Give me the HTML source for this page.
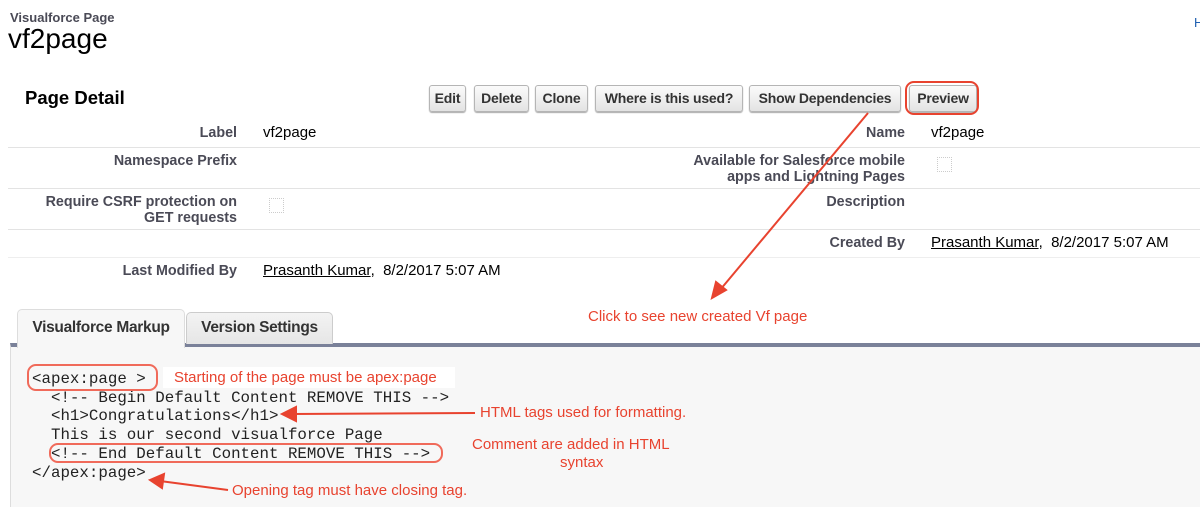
<!DOCTYPE html>
<html><head><style>
body{margin:0;width:1200px;height:501px;background:#fff;position:relative;overflow:hidden;font-family:"Liberation Sans",Arial,sans-serif}
.a{position:absolute;white-space:nowrap}
.lbl{position:absolute;font-weight:bold;font-size:14.3px;color:#4a4a56;text-align:right;line-height:16px;white-space:nowrap}
.val{position:absolute;font-size:15px;color:#000;white-space:nowrap}
.hr{position:absolute;left:8px;right:0;height:1px;background:#e3e3e3}
.btn{position:absolute;top:85px;height:25px;border:1px solid #b5b5b5;border-radius:3px;background:linear-gradient(#fbfbfb,#e3e3e3);font-weight:bold;font-size:14px;color:#333;line-height:25px;text-align:center;box-shadow:0 1px 1px #aaa;white-space:nowrap;letter-spacing:-0.2px}
.code{position:absolute;font-family:"Liberation Mono",monospace;font-size:15.8px;color:#222;white-space:pre}
.red{position:absolute;color:#e8432f;font-size:15px;white-space:nowrap;font-family:"Liberation Sans Narrow","Liberation Sans",sans-serif}
.ov{position:absolute;border:2px solid #f06a5a;border-radius:9px}
</style></head><body>
<div class="a" style="left:10px;top:10px;font-size:13px;font-weight:bold;color:#4a4a56">Visualforce Page</div>
<div class="a" style="left:8px;top:23px;font-size:28px;color:#000">vf2page</div>
<div class="a" style="left:1194px;top:15px;font-size:13px;color:#1f5fb0">H</div>
<div class="a" style="left:25px;top:87px;font-size:18.5px;font-weight:bold;color:#000">Page Detail</div>
<div class="btn" style="left:429px;width:35px">Edit</div>
<div class="btn" style="left:474px;width:53px">Delete</div>
<div class="btn" style="left:535px;width:51px">Clone</div>
<div class="btn" style="left:595px;width:146px">Where is this used?</div>
<div class="btn" style="left:749px;width:150px">Show Dependencies</div>
<div class="btn" style="left:909px;width:66px">Preview</div>
<div class="ov" style="left:905px;top:81px;width:70px;height:30px;border-color:#e8432f"></div>

<div class="lbl" style="right:963px;top:125px">Label</div>
<div class="val" style="left:263px;top:124px">vf2page</div>
<div class="lbl" style="right:295px;top:125px">Name</div>
<div class="val" style="left:931px;top:124px">vf2page</div>
<div class="hr" style="top:147px"></div>
<div class="lbl" style="right:963px;top:153px">Namespace Prefix</div>
<div class="lbl" style="right:295px;top:153px">Available for Salesforce mobile<br>apps and Lightning Pages</div>
<div class="a" style="left:937px;top:157px;width:13px;height:13px;border:1px dotted #ccc"></div>
<div class="hr" style="top:188px"></div>
<div class="lbl" style="right:963px;top:194px">Require CSRF protection on<br>GET requests</div>
<div class="a" style="left:269px;top:198px;width:13px;height:13px;border:1px dotted #ccc"></div>
<div class="lbl" style="right:295px;top:194px">Description</div>
<div class="hr" style="top:229px"></div>
<div class="lbl" style="right:295px;top:235px">Created By</div>
<div class="val" style="left:931px;top:234px"><span style="text-decoration:underline">Prasanth Kumar</span>,&nbsp; 8/2/2017 5:07 AM</div>
<div class="hr" style="top:257px;background:#eee"></div>
<div class="lbl" style="right:963px;top:263px">Last Modified By</div>
<div class="val" style="left:263px;top:262px"><span style="text-decoration:underline">Prasanth Kumar</span>,&nbsp; 8/2/2017 5:07 AM</div>

<div class="a" style="left:10px;top:343px;width:1190px;height:160px;background:#f7f7f7;border-top:4px solid #7a8199;border-left:1px solid #ddd"></div>
<div class="a" style="left:17px;top:309px;width:166px;height:38px;background:#f7f7f7;border:1px solid #ddd;border-bottom:none;border-radius:5px 5px 0 0;font-weight:bold;font-size:15.5px;color:#333;text-align:center;line-height:36px;letter-spacing:-0.3px">Visualforce Markup</div>
<div class="a" style="left:186px;top:312px;width:145px;height:31px;background:linear-gradient(#f3f3f3,#e6e6e6);border:1px solid #ccc;border-bottom:none;border-radius:5px 5px 0 0;font-weight:bold;font-size:15.5px;color:#333;text-align:center;line-height:30px;letter-spacing:-0.3px">Version Settings</div>

<div class="a" style="left:163px;top:367px;width:292px;height:21px;background:#fff"></div>
<div class="code" style="left:32px;top:370px;line-height:18.7px">&lt;apex:page &gt;
  &lt;!-- Begin Default Content REMOVE THIS --&gt;
  &lt;h1&gt;Congratulations&lt;/h1&gt;
  This is our second visualforce Page
  &lt;!-- End Default Content REMOVE THIS --&gt;
&lt;/apex:page&gt;</div>
<div class="ov" style="left:27px;top:364px;width:127px;height:23px"></div>
<div class="ov" style="left:49px;top:443px;width:390px;height:16px"></div>

<div class="red" style="left:174px;top:369px">Starting of the page must be apex:page</div>
<div class="red" style="left:480px;top:404px">HTML tags used for formatting.</div>
<div class="red" style="left:472px;top:436px;line-height:18px">Comment are added in HTML</div>
<div class="red" style="left:560px;top:454px;line-height:18px">syntax</div>
<div class="red" style="left:232px;top:482px">Opening tag must have closing tag.</div>
<div class="red" style="left:588px;top:308px">Click to see new created Vf page</div>

<svg class="a" style="left:0;top:0" width="1200" height="501">
<g stroke="#e8432f" stroke-width="2" fill="#e8432f">
<line x1="868" y1="113" x2="720" y2="290"/>
<polygon points="712,298 716,282 726,290"/>
<line x1="475" y1="413" x2="292" y2="414"/>
<polygon points="282,414 296,407 296,421"/>
<line x1="228" y1="490" x2="160" y2="481"/>
<polygon points="150,480 164,474 162,488"/>
</g></svg>
</body></html>
